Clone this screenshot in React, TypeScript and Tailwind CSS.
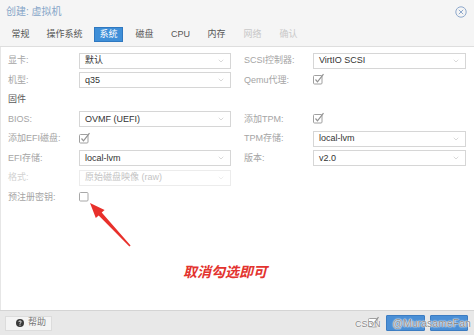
import { ChevronDown } from 'lucide-react';

const FONT = "font-['Liberation_Sans','Noto_Sans_CJK_SC',sans-serif]";

const tabs = [
  { name: '常规', w: 'w-[29px]' },
  { name: '操作系统', w: 'w-[45px]' },
  { name: '系统', w: 'w-[29px]', active: true },
  { name: '磁盘', w: 'w-[29px]' },
  { name: 'CPU', w: 'w-[29px]' },
  { name: '内存', w: 'w-[29px]' },
  { name: '网络', w: 'w-[29px]', off: true },
  { name: '确认', w: 'w-[29px]', off: true },
];

function Select({ value, disabled }: { value: string; disabled?: boolean }) {
  return (
    <div
      className={`flex-1 h-[16px] flex items-center justify-between pl-[5px] pr-[5px] border bg-white ${
        disabled ? 'border-[#ececec] text-[#c4c4c4]' : 'border-[#d6d6d6] text-[#333]'
      }`}
    >
      <span>{value}</span>
      <ChevronDown size={8} strokeWidth={1.5} className={disabled ? 'text-[#dcdcdc]' : 'text-[#b5b5b5]'} />
    </div>
  );
}

function Check({ checked }: { checked?: boolean }) {
  return (
    <svg width="12" height="12" viewBox="0 0 12 12" className="-mt-[2px]">
      <rect x="0.5" y="2.5" width="8.5" height="8.5" rx="1" fill="white" stroke={checked ? '#a0a0a0' : '#a8a8a8'} />
      {checked && <path d="M2.5 6.5 L4.5 8.8 L10.5 1.2" fill="none" stroke="#939393" strokeWidth="1.2" />}
    </svg>
  );
}

function Row({ label, labelW, children, dim, faint }: { label?: string; labelW: string; children?: React.ReactNode; dim?: boolean; faint?: boolean }) {
  return (
    <div className="h-[19.5px] flex items-center">
      <div className={`${labelW} shrink-0 ${faint ? 'text-[#d2d2d2]' : dim ? 'text-[#5a5a5a]' : 'text-[#a5a5a5]'}`}>{label}</div>
      {children}
    </div>
  );
}

export default function App() {
  return (
    <div className={`w-[474px] h-[335px] relative overflow-hidden bg-white flex flex-col text-[9px] ${FONT}`}>
      {/* header */}
      <div className="bg-[#f5f5f5]">
        <div className="h-[23px] flex items-center justify-between pl-[6px] pr-[7px]">
          <span className="text-[10px] text-[#86a5c8]">创建: 虚拟机</span>
          <svg width="12" height="12" viewBox="0 0 12 12">
            <circle cx="6" cy="6" r="5.2" fill="none" stroke="#8fa9cc" strokeWidth="1" />
            <path d="M3.8 3.8 L8.2 8.2 M8.2 3.8 L3.8 8.2" stroke="#8fa9cc" strokeWidth="1" />
          </svg>
        </div>
        <div className="h-[24px] flex items-center pl-[6px] gap-[7px] border-b border-[#dedede]">
          {tabs.map((t) => (
            <div
              key={t.name}
              className={`${t.w} h-[15px] flex items-center justify-center ${
                t.active
                  ? 'bg-[#3f8fd8] border border-[#2f78c0] text-white'
                  : t.off
                  ? 'text-[#c8c8c8]'
                  : 'text-[#555]'
              }`}
            >
              {t.name}
            </div>
          ))}
        </div>
      </div>

      {/* body */}
      <div className="flex-1 flex pt-[4px] pl-[7px] pr-[8px] gap-[13px] border-l border-[#e6e6e6]">
        <div className="w-[223px] flex flex-col">
          <Row label="显卡:" labelW="w-[71px]"><Select value="默认" /></Row>
          <Row label="机型:" labelW="w-[71px]"><Select value="q35" /></Row>
          <Row label="固件" labelW="w-[71px]" dim />
          <Row label="BIOS:" labelW="w-[71px]"><Select value="OVMF (UEFI)" /></Row>
          <Row label="添加EFI磁盘:" labelW="w-[71px]"><Check checked /></Row>
          <Row label="EFI存储:" labelW="w-[71px]"><Select value="local-lvm" /></Row>
          <Row label="格式:" labelW="w-[71px]" faint><Select value="原始磁盘映像 (raw)" disabled /></Row>
          <Row label="预注册密钥:" labelW="w-[71px]"><Check /></Row>
        </div>
        <div className="flex-1 flex flex-col">
          <Row label="SCSI控制器:" labelW="w-[69px]"><Select value="VirtIO SCSI" /></Row>
          <Row label="Qemu代理:" labelW="w-[69px]"><Check checked /></Row>
          <Row labelW="w-[69px]" />
          <Row label="添加TPM:" labelW="w-[69px]"><Check checked /></Row>
          <Row label="TPM存储:" labelW="w-[69px]"><Select value="local-lvm" /></Row>
          <Row label="版本:" labelW="w-[69px]"><Select value="v2.0" /></Row>
        </div>
      </div>

      {/* footer */}
      <div className="h-[25px] bg-[#e8e8e8] border-t border-[#d4d4d4] flex items-center pl-[5px] pr-[6px]">
        <div className="w-[47px] h-[15px] bg-[#f4f4f4] border border-[#dcdcdc] flex items-center pl-[10px] gap-[4px] text-[#777]">
          <svg width="8" height="8" viewBox="0 0 10 10">
            <circle cx="5" cy="5" r="5" fill="#3a3a3a" />
            <path d="M3.5 3.8 Q3.6 2.4 5 2.4 Q6.5 2.4 6.5 3.7 Q6.5 4.6 5.4 5 Q5 5.2 5 6" fill="none" stroke="white" strokeWidth="1.1" />
            <circle cx="5" cy="7.6" r="0.7" fill="white" />
          </svg>
          <span>帮助</span>
        </div>
        <div className="ml-auto flex items-center gap-[5px]">
          <div className="mr-[1px]"><Check checked /></div>
          <div className="w-[39px] h-[16px] bg-[#4a8fd6] border border-[#3b7cc2] rounded-[1px]" />
          <div className="w-[38px] h-[16px] bg-[#4a8fd6] border border-[#3b7cc2] rounded-[1px]" />
        </div>
      </div>

      {/* annotation overlay */}
      <svg className="absolute inset-0 pointer-events-none" width="474" height="335" viewBox="0 0 474 335">
        <polygon
          points="90,203 104.6,209.9 101.7,212.6 130.6,245.5 129.4,246.5 98.7,215.4 95.8,218.1"
          fill="#e8302b"
        />
      </svg>
      <div className="absolute left-[183px] top-[265px] text-[14px] font-bold italic text-[#e3342f] leading-none">
        取消勾选即可
      </div>
      <div className="absolute left-[355px] top-[318px] flex items-baseline gap-[12px] text-[#8a8a8a] [text-shadow:0_0_1px_#fff,0_0_1px_#fff,0_0_2px_#fff] leading-none">
        <span className="text-[9px]">CSDN</span>
        <span className="text-[10.5px]">@MurasameFan</span>
      </div>
    </div>
  );
}
